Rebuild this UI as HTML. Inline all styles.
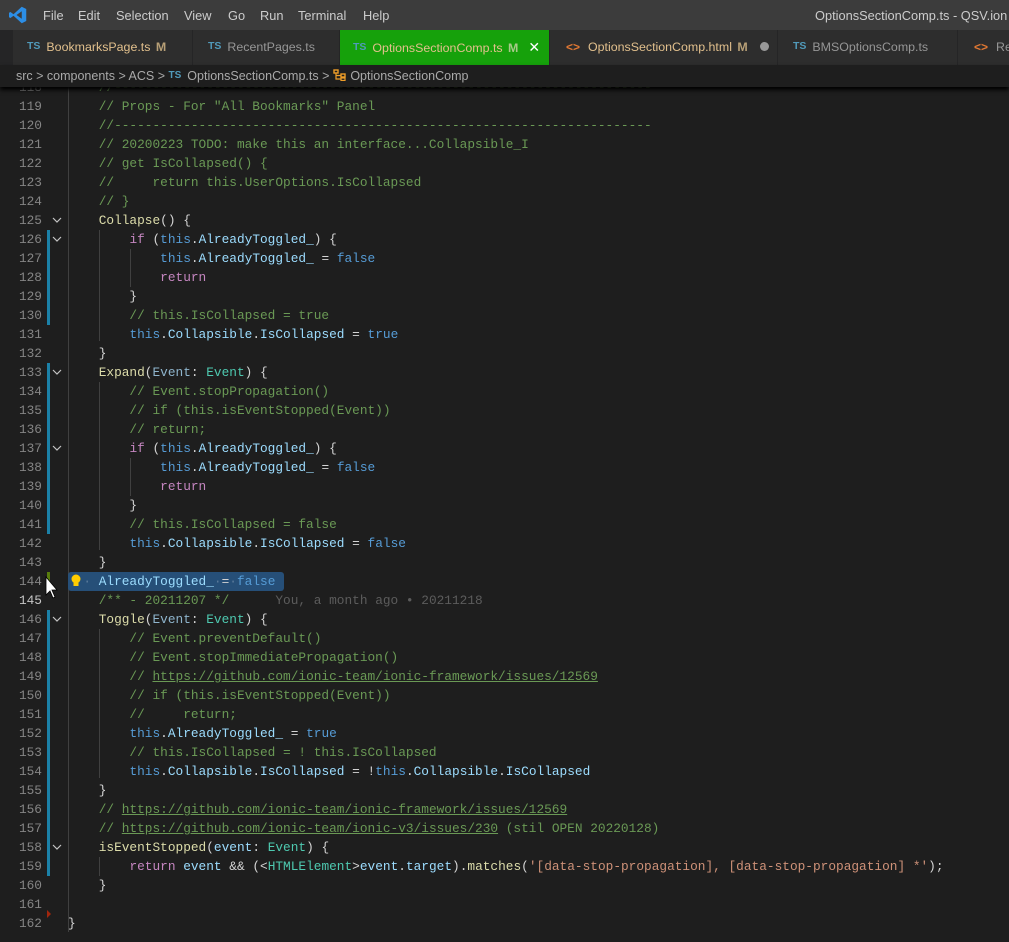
<!DOCTYPE html>
<html><head><meta charset="utf-8"><style>
*{margin:0;padding:0;box-sizing:border-box}
body{width:1009px;height:942px;background:#1e1e1e;overflow:hidden;position:relative;font-family:"Liberation Sans",sans-serif}
#menu{position:absolute;left:0;top:0;width:1009px;height:30px;background:#3c3c3c;color:#cccccc;font-size:12.8px;white-space:nowrap;overflow:hidden}
#menu span{position:absolute;top:8px}
#tabs{position:absolute;left:0;top:30px;width:1009px;height:35px;background:#252526}
.tab{position:absolute;top:0;height:35px;background:#2d2d2d;border-right:1px solid #252526;font-size:12.4px;line-height:35px;white-space:nowrap;overflow:hidden}
.ts{color:#519aba;font-weight:bold;font-size:10.5px;position:relative;top:-2px;margin-right:6px}
.ht{color:#e37933;font-weight:bold;font-size:12px;margin-right:8px}
#bc{position:absolute;left:0;top:65px;width:1009px;height:22px;background:#1e1e1e;color:#a9a9a9;font-size:12.5px;line-height:22px;box-shadow:0 3px 4px #000;z-index:5;white-space:nowrap}
.ln{position:absolute;left:0;width:42px;text-align:right;color:#858585;font-family:"Liberation Mono",monospace;font-size:12.8px;line-height:19px}
.cl{position:absolute;left:68px;white-space:pre;font-family:"Liberation Mono",monospace;font-size:12.8px;line-height:19px;color:#d4d4d4}
.c{color:#6a9955}.k{color:#569cd6}.f{color:#dcdcaa}.t{color:#4ec9b0}.v{color:#9cdcfe}.r{color:#c586c0}.s{color:#ce9178}.d{color:#8fb5cd}.u{text-decoration:underline}
.bar{position:absolute;left:47px;width:3px;background:#1b81a8}
.g{position:absolute;width:1px;background:#404040}
</style></head><body>
<div id="menu">
<svg style="position:absolute;left:9px;top:6px" width="18" height="18" viewBox="0 0 24 24"><path d="M17 1 L23 4 V20 L17 23 L6 13 L2 16 L0 15 V9 L2 8 L6 11 Z M17 7 L10 12 L17 17 Z" fill="#2c8ee6"/></svg>
<span style="left:43px">File</span><span style="left:78px">Edit</span><span style="left:116px">Selection</span><span style="left:184px">View</span><span style="left:228px">Go</span><span style="left:260px">Run</span><span style="left:298px">Terminal</span><span style="left:363px">Help</span>
<span style="left:815px">OptionsSectionComp.ts - QSV.ion - V</span>
</div>
<div id="tabs">
<div class="tab" style="left:13px;width:180px;padding-left:14px;color:#e2c08d"><span class="ts">TS</span>BookmarksPage.ts <b style="color:#b8a077;margin-left:2px">M</b></div>
<div class="tab" style="left:193px;width:147px;padding-left:15px;color:#969696"><span class="ts">TS</span>RecentPages.ts</div>
<div class="tab" style="left:340px;width:210px;padding-left:13px;background:#16a10b;color:#e2c08d"><span class="ts">TS</span>OptionsSectionComp.ts <b style="color:#a9c98a;margin-left:2px">M</b><span style="color:#fff;margin-left:10px;font-size:14px">✕</span></div>
<div class="tab" style="left:550px;width:228px;padding-left:16px;color:#e2c08d"><span class="ht">&lt;&gt;</span>OptionsSectionComp.html <b style="color:#b8a077;margin-left:2px">M</b><span style="display:inline-block;width:9px;height:9px;border-radius:50%;background:#999;margin-left:12px"></span></div>
<div class="tab" style="left:778px;width:180px;padding-left:15px;color:#969696"><span class="ts">TS</span>BMSOptionsComp.ts</div>
<div class="tab" style="left:958px;width:60px;padding-left:16px;color:#969696"><span class="ht">&lt;&gt;</span>Rec</div>
</div>
<div id="bc"><span style="position:absolute;left:16px">src &gt; components &gt; ACS &gt; <span class="ts" style="font-size:10px">TS</span>OptionsSectionComp.ts &gt; <svg width="14" height="12" viewBox="0 0 14 12" style="vertical-align:-1px"><rect x="1" y="1" width="4" height="3" fill="none" stroke="#ee9d28" stroke-width="1.4"/><rect x="8" y="5" width="4" height="3" fill="none" stroke="#ee9d28" stroke-width="1.4"/><rect x="8" y="9" width="4" height="2.5" fill="none" stroke="#ee9d28" stroke-width="1.2"/><path d="M3 4 V10 H8 M3 6.5 H8" stroke="#ee9d28" fill="none" stroke-width="1.2"/></svg> OptionsSectionComp</span></div>

<div class="g" style="left:68px;top:87px;height:845px"></div>
<div class="g" style="left:99px;top:230px;height:111px"></div>
<div class="g" style="left:130px;top:249px;height:38px"></div>
<div class="g" style="left:99px;top:382px;height:168px"></div>
<div class="g" style="left:130px;top:458px;height:38px"></div>
<div class="g" style="left:99px;top:629px;height:149px"></div>
<div class="g" style="left:99px;top:857px;height:19px"></div>

<div class="bar" style="top:230px;height:95px"></div>
<div class="bar" style="top:363px;height:171px"></div>
<div class="bar" style="top:610px;height:266px"></div>
<div class="bar" style="top:572px;height:19px;background:#587c0c"></div>
<div style="position:absolute;left:47px;top:910px;width:0;height:0;border-top:4px solid transparent;border-bottom:4px solid transparent;border-left:4px solid #a1260d"></div>

<div style="position:absolute;left:68px;top:572px;width:216px;height:19px;background:#264f78;border-radius:3px"></div>
<svg style="position:absolute;left:69px;top:573px" width="14" height="16" viewBox="0 0 14 16"><circle cx="7" cy="6" r="4.5" fill="#ffcc00"/><rect x="4.5" y="10" width="5" height="3" fill="#ffcc00"/></svg>

<div id="code">
<div class="ln" style="top:78px">118</div><div class="cl c" style="top:78px">    //----------------------------------------------------------------------</div>
<div class="ln" style="top:97px">119</div><div class="cl c" style="top:97px">    // Props - For "All Bookmarks" Panel</div>
<div class="ln" style="top:116px">120</div><div class="cl c" style="top:116px">    //----------------------------------------------------------------------</div>
<div class="ln" style="top:135px">121</div><div class="cl c" style="top:135px">    // 20200223 TODO: make this an interface...Collapsible_I</div>
<div class="ln" style="top:154px">122</div><div class="cl c" style="top:154px">    // get IsCollapsed() {</div>
<div class="ln" style="top:173px">123</div><div class="cl c" style="top:173px">    //     return this.UserOptions.IsCollapsed</div>
<div class="ln" style="top:192px">124</div><div class="cl c" style="top:192px">    // }</div>
<div class="ln" style="top:211px">125</div><div class="cl" style="top:211px">    <span class="f">Collapse</span>() {</div>
<div class="ln" style="top:230px">126</div><div class="cl" style="top:230px">        <span class="r">if</span> (<span class="k">this</span>.<span class="v">AlreadyToggled_</span>) {</div>
<div class="ln" style="top:249px">127</div><div class="cl" style="top:249px">            <span class="k">this</span>.<span class="v">AlreadyToggled_</span> = <span class="k">false</span></div>
<div class="ln" style="top:268px">128</div><div class="cl" style="top:268px">            <span class="r">return</span></div>
<div class="ln" style="top:287px">129</div><div class="cl" style="top:287px">        }</div>
<div class="ln" style="top:306px">130</div><div class="cl c" style="top:306px">        // this.IsCollapsed = true</div>
<div class="ln" style="top:325px">131</div><div class="cl" style="top:325px">        <span class="k">this</span>.<span class="v">Collapsible</span>.<span class="v">IsCollapsed</span> = <span class="k">true</span></div>
<div class="ln" style="top:344px">132</div><div class="cl" style="top:344px">    }</div>
<div class="ln" style="top:363px">133</div><div class="cl" style="top:363px">    <span class="f">Expand</span>(<span class="d">Event</span>: <span class="t">Event</span>) {</div>
<div class="ln" style="top:382px">134</div><div class="cl c" style="top:382px">        // Event.stopPropagation()</div>
<div class="ln" style="top:401px">135</div><div class="cl c" style="top:401px">        // if (this.isEventStopped(Event))</div>
<div class="ln" style="top:420px">136</div><div class="cl c" style="top:420px">        // return;</div>
<div class="ln" style="top:439px">137</div><div class="cl" style="top:439px">        <span class="r">if</span> (<span class="k">this</span>.<span class="v">AlreadyToggled_</span>) {</div>
<div class="ln" style="top:458px">138</div><div class="cl" style="top:458px">            <span class="k">this</span>.<span class="v">AlreadyToggled_</span> = <span class="k">false</span></div>
<div class="ln" style="top:477px">139</div><div class="cl" style="top:477px">            <span class="r">return</span></div>
<div class="ln" style="top:496px">140</div><div class="cl" style="top:496px">        }</div>
<div class="ln" style="top:515px">141</div><div class="cl c" style="top:515px">        // this.IsCollapsed = false</div>
<div class="ln" style="top:534px">142</div><div class="cl" style="top:534px">        <span class="k">this</span>.<span class="v">Collapsible</span>.<span class="v">IsCollapsed</span> = <span class="k">false</span></div>
<div class="ln" style="top:553px">143</div><div class="cl" style="top:553px">    }</div>
<div class="ln" style="top:572px">144</div><div class="cl" style="top:572px"><span style="color:#5a7a9a">  · </span><span class="v">AlreadyToggled_</span><span style="color:#5a7a9a">·</span>=<span style="color:#5a7a9a">·</span><span class="k">false</span></div>
<div class="ln" style="top:591px;color:#c6c6c6">145</div><div class="cl" style="top:591px">    <span class="c">/** - 20211207 */</span>      <span style="color:#5c5c5c">You, a month ago • 20211218</span></div>
<div class="ln" style="top:610px">146</div><div class="cl" style="top:610px">    <span class="f">Toggle</span>(<span class="d">Event</span>: <span class="t">Event</span>) {</div>
<div class="ln" style="top:629px">147</div><div class="cl c" style="top:629px">        // Event.preventDefault()</div>
<div class="ln" style="top:648px">148</div><div class="cl c" style="top:648px">        // Event.stopImmediatePropagation()</div>
<div class="ln" style="top:667px">149</div><div class="cl c" style="top:667px">        // <span class="u">https://github.com/ionic-team/ionic-framework/issues/12569</span></div>
<div class="ln" style="top:686px">150</div><div class="cl c" style="top:686px">        // if (this.isEventStopped(Event))</div>
<div class="ln" style="top:705px">151</div><div class="cl c" style="top:705px">        //     return;</div>
<div class="ln" style="top:724px">152</div><div class="cl" style="top:724px">        <span class="k">this</span>.<span class="v">AlreadyToggled_</span> = <span class="k">true</span></div>
<div class="ln" style="top:743px">153</div><div class="cl c" style="top:743px">        // this.IsCollapsed = ! this.IsCollapsed</div>
<div class="ln" style="top:762px">154</div><div class="cl" style="top:762px">        <span class="k">this</span>.<span class="v">Collapsible</span>.<span class="v">IsCollapsed</span> = !<span class="k">this</span>.<span class="v">Collapsible</span>.<span class="v">IsCollapsed</span></div>
<div class="ln" style="top:781px">155</div><div class="cl" style="top:781px">    }</div>
<div class="ln" style="top:800px">156</div><div class="cl c" style="top:800px">    // <span class="u">https://github.com/ionic-team/ionic-framework/issues/12569</span></div>
<div class="ln" style="top:819px">157</div><div class="cl c" style="top:819px">    // <span class="u">https://github.com/ionic-team/ionic-v3/issues/230</span> (stil OPEN 20220128)</div>
<div class="ln" style="top:838px">158</div><div class="cl" style="top:838px">    <span class="f">isEventStopped</span>(<span class="v">event</span>: <span class="t">Event</span>) {</div>
<div class="ln" style="top:857px">159</div><div class="cl" style="top:857px">        <span class="r">return</span> <span class="v">event</span> &amp;&amp; (&lt;<span class="t">HTMLElement</span>&gt;<span class="v">event</span>.<span class="v">target</span>).<span class="f">matches</span>(<span class="s">'[data-stop-propagation], [data-stop-propagation] *'</span>);</div>
<div class="ln" style="top:876px">160</div><div class="cl" style="top:876px">    }</div>
<div class="ln" style="top:895px">161</div>
<div class="ln" style="top:914px">162</div><div class="cl" style="top:914px">}</div>
</div>

<svg style="position:absolute;left:0;top:0" width="70" height="942">
<g fill="none" stroke="#c5c5c5" stroke-width="1.2">
<path d="M53 218 l4 4 l4 -4"/><path d="M53 237 l4 4 l4 -4"/><path d="M53 370 l4 4 l4 -4"/><path d="M53 446 l4 4 l4 -4"/><path d="M53 617 l4 4 l4 -4"/><path d="M53 845 l4 4 l4 -4"/>
</g>
<path d="M46 577 V595 L50 591 L53 598 L55 597 L52 590 L57 590 Z" fill="#fff" stroke="#000" stroke-width="0.8"/>
</svg>
</body></html>
